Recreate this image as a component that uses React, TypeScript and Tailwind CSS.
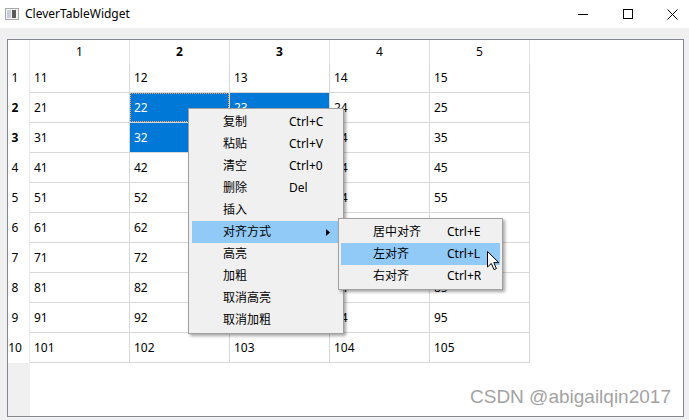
import React from 'react';

const font = "font-['Noto_Sans','Noto_Sans_CJK_SC',sans-serif]";
const cols = [1, 2, 3, 4, 5];
const rows = [1, 2, 3, 4, 5, 6, 7, 8, 9, 10];

const isSel = (r: number, c: number) => (r === 2 || r === 3) && (c === 2 || c === 3);
// cells that sit completely under the popup menus
const hidden = (r: number, c: number) => (c === 3 && r >= 3 && r <= 9) || (c === 4 && (r === 6 || r === 7));

const mainItems: { label: string; key?: string; sub?: boolean; active?: boolean }[] = [
  { label: '复制', key: 'Ctrl+C' },
  { label: '粘贴', key: 'Ctrl+V' },
  { label: '清空', key: 'Ctrl+0' },
  { label: '删除', key: 'Del' },
  { label: '插入' },
  { label: '对齐方式', sub: true, active: true },
  { label: '高亮' },
  { label: '加粗' },
  { label: '取消高亮' },
  { label: '取消加粗' },
];

const subItems = [
  { label: '居中对齐', key: 'Ctrl+E' },
  { label: '左对齐', key: 'Ctrl+L', active: true },
  { label: '右对齐', key: 'Ctrl+R' },
];

function Cell({ r, c }: { r: number; c: number }) {
  const sel = isSel(r, c);
  const focus = r === 2 && c === 2;
  const text = hidden(r, c) ? '' : `${r}${c}`;
  return (
    <div
      className={`w-[100px] h-[30px] border-r border-b border-[#d8d8d8] ${sel ? 'bg-[#0078d7] text-white' : 'text-black'}`}
    >
      {focus ? (
        <div className="h-full w-full border border-dotted border-[#f4a460] flex items-center pl-[3px]">{text}</div>
      ) : (
        <div className="h-full flex items-center pl-[4px]">{text}</div>
      )}
    </div>
  );
}

export default function App() {
  return (
    <div className={`relative w-[689px] h-[420px] overflow-hidden bg-[#f0f0f0] text-[12px] ${font}`}>
      {/* title bar */}
      <div className="h-[28px] bg-white flex items-center">
        <svg width="14" height="12" viewBox="0 0 14 12" className="ml-[5px]">
          <rect x="0.5" y="0.5" width="13" height="11" fill="#f4f4f4" stroke="#a8a8a8" />
          <rect x="2" y="2" width="4" height="8" fill="#c8d0dc" />
          <rect x="7" y="2" width="4" height="8" fill="#5a5a5a" />
        </svg>
        <span className="ml-[6px] text-black">CleverTableWidget</span>
        <div className="ml-auto mr-[-6px] flex">
          <div className="w-[45px] h-[28px] flex items-center justify-center">
            <div className="w-[10px] h-px bg-black" />
          </div>
          <div className="w-[45px] h-[28px] flex items-center justify-center">
            <div className="w-[10px] h-[10px] border border-black" />
          </div>
          <div className="w-[45px] h-[28px] flex items-center justify-center">
            <svg width="11" height="11" viewBox="0 0 11 11">
              <path d="M0.5 0.5L10.5 10.5M10.5 0.5L0.5 10.5" stroke="#000" strokeWidth="1" />
            </svg>
          </div>
        </div>
      </div>

      {/* body */}
      <div className="pl-[7px] pr-[5px] pt-[11px]">
        <div className="h-[378px] border border-[#828790] bg-white flex flex-col">
          <div className="flex h-[23px]">
            <div className="w-[22px] border-r border-[#e8e8e8]" />
            {cols.map((c) => (
              <div
                key={c}
                className={`w-[100px] border-r border-[#e0e0e0] flex items-center justify-center text-black ${c === 2 || c === 3 ? 'font-bold' : ''}`}
              >
                {c}
              </div>
            ))}
          </div>
          {rows.map((r) => (
            <div key={r} className="flex">
              <div
                className={`w-[22px] h-[30px] border-r border-[#e8e8e8] pr-[7px] flex items-center justify-center text-black ${r === 2 || r === 3 ? 'font-bold' : ''}`}
              >
                {r}
              </div>
              {cols.map((c) => (
                <Cell key={c} r={r} c={c} />
              ))}
            </div>
          ))}
          <div className="flex-1 flex">
            <div className="w-[22px] bg-[#f0f0f0]" />
          </div>
        </div>
      </div>

      {/* context menu */}
      <div className="absolute left-[188px] top-[108px] w-[156px] border border-[#a0a0a0] bg-[#f0f0f0] px-[3px] py-[2px] shadow-[2px_2px_3px_rgba(0,0,0,0.35)] text-black">
        {mainItems.map((it) => (
          <div key={it.label} className={`h-[22px] flex items-center pl-[31px] ${it.active ? 'bg-[#91c9f7]' : ''}`}>
            <span className="w-[66px]">{it.label}</span>
            {it.key && <span>{it.key}</span>}
            {it.sub && (
              <svg width="4" height="7" viewBox="0 0 4 7" className="ml-auto mr-[10px]">
                <path d="M0 0L4 3.5L0 7Z" fill="#000" />
              </svg>
            )}
          </div>
        ))}
      </div>

      {/* submenu */}
      <div className="absolute left-[338px] top-[218px] w-[165px] border border-[#a0a0a0] bg-[#f0f0f0] px-[2px] py-[2px] shadow-[2px_2px_3px_rgba(0,0,0,0.35)] text-black">
        {subItems.map((it) => (
          <div key={it.label} className={`h-[22px] flex items-center pl-[32px] ${it.active ? 'bg-[#91c9f7]' : ''}`}>
            <span className="w-[74px]">{it.label}</span>
            <span>{it.key}</span>
          </div>
        ))}
      </div>

      {/* mouse cursor */}
      <svg width="13" height="20" viewBox="0 0 13 20" className="absolute left-[487px] top-[251px]">
        <path d="M0.5 0.5L0.5 16L4.3 12.4L7 18.6L9.4 17.6L6.8 11.6L11.8 11.6Z" fill="#fff" stroke="#000" strokeWidth="1" strokeLinejoin="round" />
      </svg>

      {/* watermark */}
      <div className="absolute left-[470px] top-[386px] leading-[22px] text-[19px] text-[#a3a3a3] font-['Liberation_Sans',sans-serif] [text-shadow:0_0_1px_#fff]">
        CSDN @abigailqin2017
      </div>
    </div>
  );
}
